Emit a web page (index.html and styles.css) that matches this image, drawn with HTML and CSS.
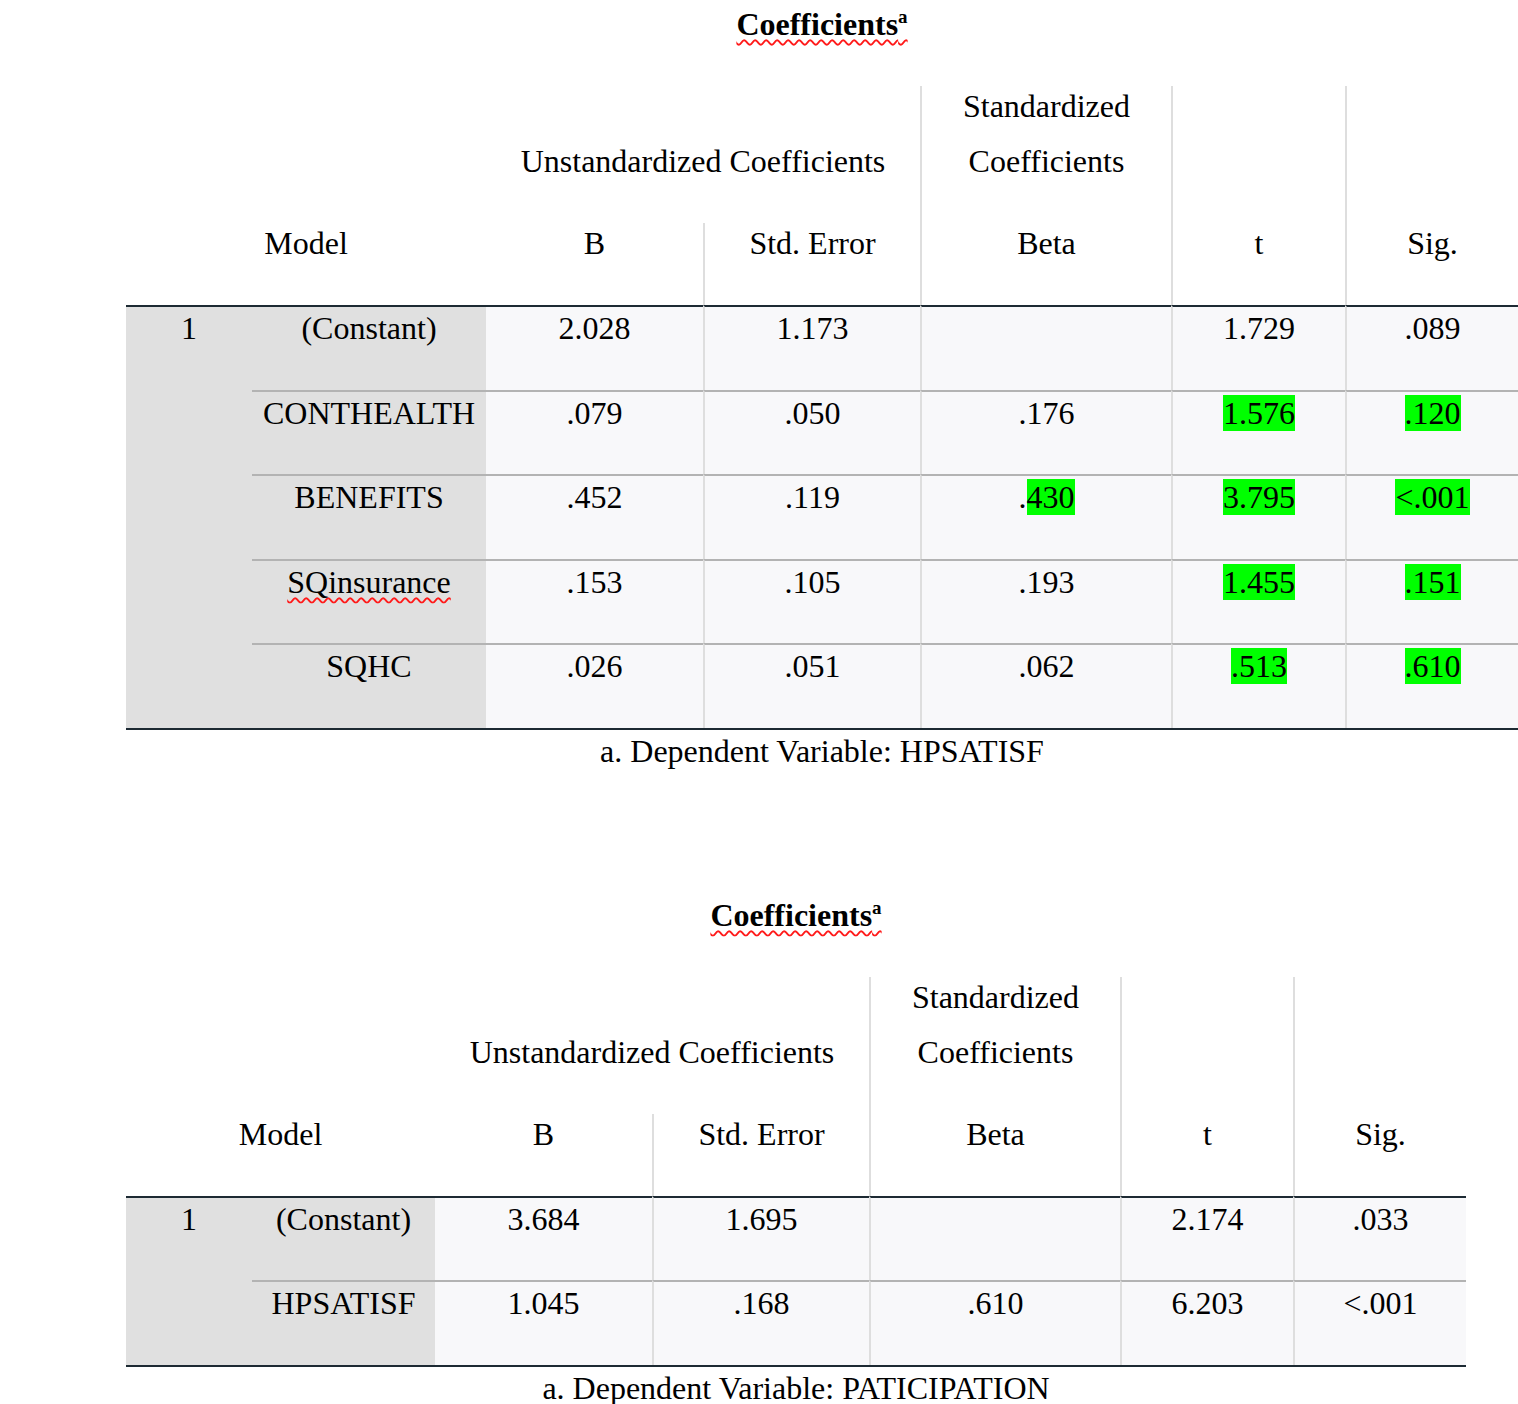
FILE: index.html
```html
<!DOCTYPE html>
<html lang="en">
<head>
<meta charset="utf-8">
<title>Coefficients</title>
<link rel="stylesheet" href="styles.css">
</head>
<body>
<main class="page">
  <section class="coef">
    <h2 class="title"><span class="wavy">Coefficients<sup>a</sup></span></h2>
    <div class="grid g1">
      <div class="h h-model">Model</div>
      <div class="h h-unstd">Unstandardized Coefficients</div>
      <div class="h h-std vl"><span class="ln">Standardized</span><span class="ln ln2">Coefficients</span></div>
      <div class="h h-tall h-t vl">t</div>
      <div class="h h-tall h-sig vl">Sig.</div>
      <div class="h h-sub h-b">B</div>
      <div class="h h-sub h-se vl">Std. Error</div>
      <div class="h h-sub h-beta vl">Beta</div>

      <div class="c num first span5">1</div>
      <div class="c name first">(Constant)</div>
      <div class="c first">2.028</div>
      <div class="c first vl">1.173</div>
      <div class="c first vl"></div>
      <div class="c first vl">1.729</div>
      <div class="c first vl">.089</div>

      <div class="c name sep">CONTHEALTH</div>
      <div class="c sep">.079</div>
      <div class="c sep vl">.050</div>
      <div class="c sep vl">.176</div>
      <div class="c sep vl"><span class="hl">1.576</span></div>
      <div class="c sep vl"><span class="hl">.120</span></div>

      <div class="c name sep">BENEFITS</div>
      <div class="c sep">.452</div>
      <div class="c sep vl">.119</div>
      <div class="c sep vl">.<span class="hl">430</span></div>
      <div class="c sep vl"><span class="hl">3.795</span></div>
      <div class="c sep vl"><span class="hl">&lt;.001</span></div>

      <div class="c name sep"><span class="wavy">SQinsurance</span></div>
      <div class="c sep">.153</div>
      <div class="c sep vl">.105</div>
      <div class="c sep vl">.193</div>
      <div class="c sep vl"><span class="hl">1.455</span></div>
      <div class="c sep vl"><span class="hl">.151</span></div>

      <div class="c name sep">SQHC</div>
      <div class="c sep">.026</div>
      <div class="c sep vl">.051</div>
      <div class="c sep vl">.062</div>
      <div class="c sep vl"><span class="hl">.513</span></div>
      <div class="c sep vl"><span class="hl">.610</span></div>
    </div>
    <p class="note">a. Dependent Variable: HPSATISF</p>
  </section>

  <section class="coef coef-2">
    <h2 class="title"><span class="wavy">Coefficients<sup>a</sup></span></h2>
    <div class="grid g2">
      <div class="h h-model">Model</div>
      <div class="h h-unstd">Unstandardized Coefficients</div>
      <div class="h h-std vl"><span class="ln">Standardized</span><span class="ln ln2">Coefficients</span></div>
      <div class="h h-tall h-t vl">t</div>
      <div class="h h-tall h-sig vl">Sig.</div>
      <div class="h h-sub h-b">B</div>
      <div class="h h-sub h-se vl">Std. Error</div>
      <div class="h h-sub h-beta vl">Beta</div>

      <div class="c num first span2">1</div>
      <div class="c name first">(Constant)</div>
      <div class="c first">3.684</div>
      <div class="c first vl">1.695</div>
      <div class="c first vl"></div>
      <div class="c first vl">2.174</div>
      <div class="c first vl">.033</div>

      <div class="c name sep">HPSATISF</div>
      <div class="c sep">1.045</div>
      <div class="c sep vl">.168</div>
      <div class="c sep vl">.610</div>
      <div class="c sep vl">6.203</div>
      <div class="c sep vl">&lt;.001</div>
    </div>
    <p class="note">a. Dependent Variable: PATICIPATION</p>
  </section>
</main>
</body>
</html>
```

FILE: styles.css
```css
* { box-sizing: border-box; }

html, body {
  margin: 0;
  padding: 0;
  background: #ffffff;
}

body {
  font-family: "Liberation Serif", "Times New Roman", serif;
  font-size: 32px;
  line-height: 37px;
  color: #000;
}

.page {
  padding-left: 126px;
}

.coef {
  width: max-content;
}

.coef-2 {
  margin-top: 121px;
}

.title {
  margin: 0;
  padding-top: 6px;
  font-size: 32px;
  line-height: 37px;
  font-weight: bold;
  text-align: center;
}

.title sup {
  font-size: 19px;
  line-height: 0;
  vertical-align: 12px;
}

.wavy {
  text-decoration: underline wavy #ff1a1a;
  text-decoration-thickness: 1.5px;
  text-underline-offset: 4px;
  text-decoration-skip-ink: none;
}

.grid {
  display: grid;
  margin-top: 43px;
  border-bottom: 2px solid #1d2a33;
}

.g1 {
  grid-template-columns: 126px 234px 217px 217px 251px 174px 173px;
  grid-template-rows: 137px 82px repeat(5, 84.5px);
}

.g2 {
  grid-template-columns: 126px 183px 217px 217px 251px 173px 173px;
  grid-template-rows: 137px 82px repeat(2, 84.5px);
}

.h {
  text-align: center;
  background: #fff;
}

.h-model { grid-column: 1 / 3; grid-row: 1 / 3; padding-top: 139px; }
.h-unstd { grid-column: 3 / 5; grid-row: 1; padding-top: 57px; }
.h-std   { grid-column: 5; grid-row: 1; display: flex; flex-direction: column; align-items: center; padding-top: 2px; }
.h-t     { grid-column: 6; grid-row: 1 / 3; }
.h-sig   { grid-column: 7; grid-row: 1 / 3; }
.h-tall  { padding-top: 139px; }
.h-sub   { padding-top: 2px; }
.h-b     { grid-column: 3; grid-row: 2; }
.h-se    { grid-column: 4; grid-row: 2; }
.h-beta  { grid-column: 5; grid-row: 2; }

.ln2 { margin-top: 18px; }

.vl {
  border-left: 2px solid #dedede;
}

.c {
  text-align: center;
  padding-top: 3px;
  background: #f8f8fa;
}

.c.name,
.c.num {
  background: #e0e0e0;
}

.num {
  grid-column: 1;
}

.span5 { grid-row: 3 / span 5; }
.span2 { grid-row: 3 / span 2; }

.first {
  border-top: 2px solid #1d2a33;
}

.sep {
  border-top: 2px solid #b3b3b3;
}

.hl {
  background: #00ff00;
}

.note {
  margin: 3px 0 0;
  text-align: center;
  line-height: 37px;
}
```
